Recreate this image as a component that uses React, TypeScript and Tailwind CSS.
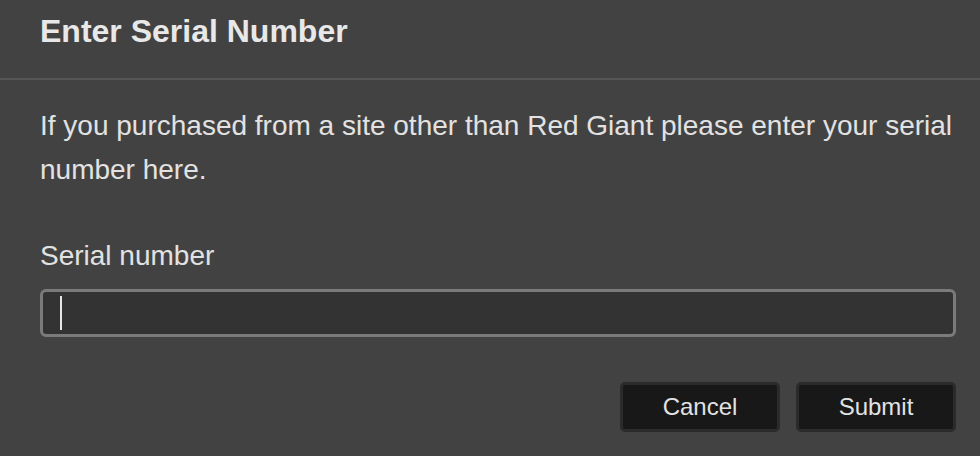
import * as React from "react";

export default function App() {
  return (
    <div
      className="flex h-[456px] w-[980px] flex-col overflow-hidden bg-[#424242] text-[#e2e2e2]"
      style={{ fontFamily: '"Liberation Sans", Arial, sans-serif' }}
    >
      {/* ── Header ── */}
      <div className="h-[78px] shrink-0 pl-[40px] pt-[15px]">
        <h1 className="text-[32px] font-bold leading-[32px] text-[#e8e8e8]">Enter Serial Number</h1>
      </div>
      <div className="h-[2px] shrink-0 bg-[#555555]" />

      {/* ── Body ── */}
      <div className="flex flex-col pl-[40px] pr-[24px] pt-[24px]">
        <p className="text-[28px] leading-[44px]">
          If you purchased from a site other than Red Giant please enter your serial number here.
        </p>
        <label className="mt-[42px] text-[28px] leading-[44px]">Serial number</label>
        <div className="mt-[11px] flex h-[48px] items-center rounded-[6px] border-[3px] border-[#7b7b7b] bg-[#333333] pl-[17px]">
          <div className="h-[34px] w-[2px] bg-[#e6e6e6]" />
        </div>

        <div className="mt-[45px] flex justify-end gap-[16px]">
          <button className="h-[50px] w-[160px] rounded-[5px] border-[3px] border-[#2b2b2b] bg-[#181818] text-[24px] text-[#e2e2e2]">
            Cancel
          </button>
          <button className="h-[50px] w-[160px] rounded-[5px] border-[3px] border-[#2b2b2b] bg-[#181818] text-[24px] text-[#e2e2e2]">
            Submit
          </button>
        </div>
      </div>
    </div>
  );
}
